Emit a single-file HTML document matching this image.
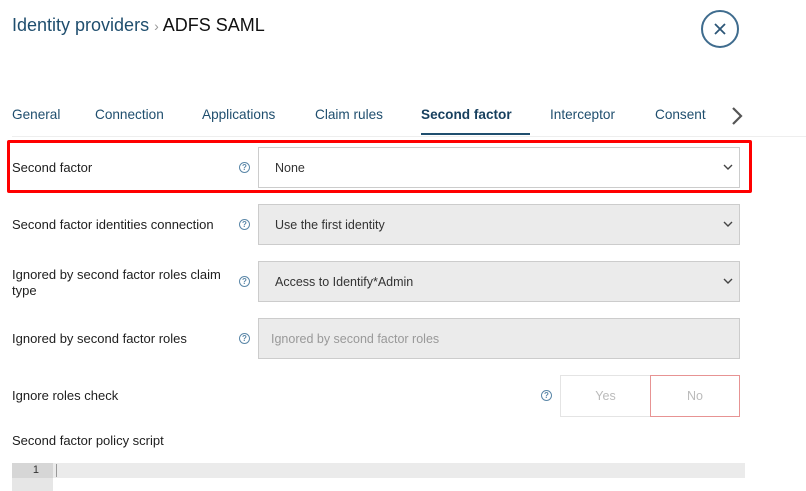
<!DOCTYPE html>
<html><head><style>
*{box-sizing:border-box;margin:0;padding:0}
body{width:806px;height:491px;overflow:hidden;background:#fff;font-family:"Liberation Sans",sans-serif;position:relative;color:#222}
.a{position:absolute}
.lbl{font-size:13px;color:#1e1e1e}
.sel{position:absolute;left:258px;width:482px;height:41px;border:1px solid #ccc;background:#ebebeb;font-size:12.5px;color:#333;padding:13px 0 0 16px}
.sel svg{position:absolute;right:6px;top:15px}
.q{position:absolute;width:11px;height:11px;border:1px solid #5b87a8;border-radius:50%;font-size:8px;color:#5b87a8;text-align:center;line-height:9px;font-weight:bold}
.tab{position:absolute;top:107px;font-size:13.6px;color:#1f4e6e}
</style></head><body>
<div class="a" style="left:12px;top:15px;font-size:18px;color:#1f4e6e">Identity providers <span style="color:#999;font-size:14px">›</span> <span style="color:#111">ADFS SAML</span></div>
<div class="a" style="left:701px;top:10px;width:38px;height:38px;border:2px solid #3f6c8e;border-radius:50%"></div>
<svg class="a" style="left:713px;top:22px" width="14" height="14"><path d="M2 2L12 12M12 2L2 12" stroke="#2c5677" stroke-width="1.8"/></svg>
<div class="tab" style="left:12px">General</div>
<div class="tab" style="left:95px">Connection</div>
<div class="tab" style="left:202px">Applications</div>
<div class="tab" style="left:315px">Claim rules</div>
<div class="tab" style="left:421px;font-weight:bold;color:#163f5e">Second factor</div>
<div class="tab" style="left:550px">Interceptor</div>
<div class="tab" style="left:655px">Consent</div>
<svg class="a" style="left:730px;top:106px" width="14" height="20"><path d="M3 2L11 10L3 18" stroke="#555" stroke-width="2.2" fill="none"/></svg>
<div class="a" style="left:12px;top:136px;width:794px;height:1px;background:#eee"></div>
<div class="a" style="left:421px;top:133px;width:109px;height:2px;background:#1f4e6e"></div>

<div class="a" style="left:7px;top:140px;width:745px;height:53px;border:3px solid #f00;border-radius:2px"></div>
<div class="a lbl" style="left:12px;top:160px">Second factor</div>
<div class="q" style="left:239px;top:162px">?</div>
<div class="sel" style="top:147px;background:#fff">None<svg width="10" height="8"><path d="M1 2L5 6L9 2" stroke="#444" stroke-width="1.4" fill="none"/></svg></div>

<div class="a lbl" style="left:12px;top:217px">Second factor identities connection</div>
<div class="q" style="left:239px;top:219px">?</div>
<div class="sel" style="top:204px">Use the first identity<svg width="10" height="8"><path d="M1 2L5 6L9 2" stroke="#444" stroke-width="1.4" fill="none"/></svg></div>

<div class="a lbl" style="left:12px;top:267px;line-height:16px">Ignored by second factor roles claim<br>type</div>
<div class="q" style="left:239px;top:276px">?</div>
<div class="sel" style="top:261px">Access to Identify*Admin<svg width="10" height="8"><path d="M1 2L5 6L9 2" stroke="#444" stroke-width="1.4" fill="none"/></svg></div>

<div class="a lbl" style="left:12px;top:331px">Ignored by second factor roles</div>
<div class="q" style="left:239px;top:333px">?</div>
<div class="sel" style="top:318px;color:#999;padding-left:12px">Ignored by second factor roles</div>

<div class="a lbl" style="left:12px;top:388px">Ignore roles check</div>
<div class="q" style="left:541px;top:390px">?</div>
<div class="a" style="left:560px;top:375px;width:91px;height:42px;border:1px solid #e4e4e4;font-size:12.5px;color:#bbb;text-align:center;line-height:40px">Yes</div>
<div class="a" style="left:650px;top:375px;width:90px;height:42px;border:1px solid #e79393;font-size:12.5px;color:#bbb;text-align:center;line-height:40px">No</div>

<div class="a lbl" style="left:12px;top:433px">Second factor policy script</div>
<div class="a" style="left:12px;top:463px;width:733px;height:15px;background:#ebebeb"></div>
<div class="a" style="left:12px;top:463px;width:41px;height:28px;background:#e6e6e6"></div>
<div class="a" style="left:12px;top:463px;width:41px;height:15px;background:#d6d6d6;font-size:11px;color:#333;text-align:right;padding-right:14px;line-height:15px">1</div>
<div class="a" style="left:56px;top:464px;width:1px;height:13px;background:#999"></div>
</body></html>
